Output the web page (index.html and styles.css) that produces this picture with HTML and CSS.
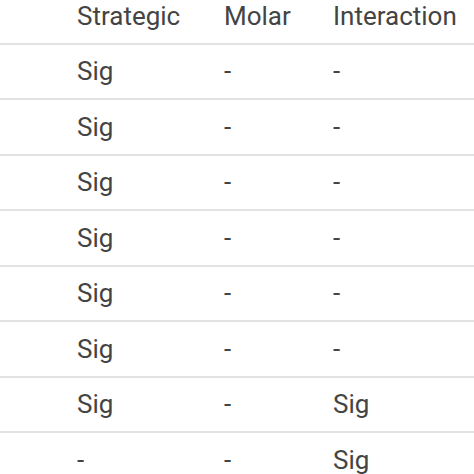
FILE: index.html
```html
<!DOCTYPE html>
<html>
<head>
<meta charset="utf-8">
<link rel="stylesheet" href="styles.css">
</head>
<body>
<div class="table">
  <div class="row head"><span>Strategic</span><span>Molar</span><span>Interaction</span></div>
  <div class="row"><span>Sig</span><span>-</span><span>-</span></div>
  <div class="row"><span>Sig</span><span>-</span><span>-</span></div>
  <div class="row"><span>Sig</span><span>-</span><span>-</span></div>
  <div class="row"><span>Sig</span><span>-</span><span>-</span></div>
  <div class="row"><span>Sig</span><span>-</span><span>-</span></div>
  <div class="row"><span>Sig</span><span>-</span><span>-</span></div>
  <div class="row"><span>Sig</span><span>-</span><span>Sig</span></div>
  <div class="row"><span>-</span><span>-</span><span>Sig</span></div>
</div>
</body>
</html>
```
FILE: styles.css
```css
html, body {
  margin: 0;
  padding: 0;
  background: #fff;
  overflow: hidden;
}
body {
  font-family: Roboto, "Liberation Sans", sans-serif;
  font-size: 26px;
  color: #444;
}
.table {
  margin-top: -11px;
  display: flex;
  flex-direction: column;
}
.row {
  display: grid;
  grid-template-columns: 147px 109px 1fr;
  align-items: center;
  height: 53.5px;
  padding-left: 77px;
  border-bottom: 2px solid #e2e2e2;
}
.row span {
  white-space: nowrap;
  line-height: 1;
}
.row:last-child {
  border-bottom: none;
}
```
